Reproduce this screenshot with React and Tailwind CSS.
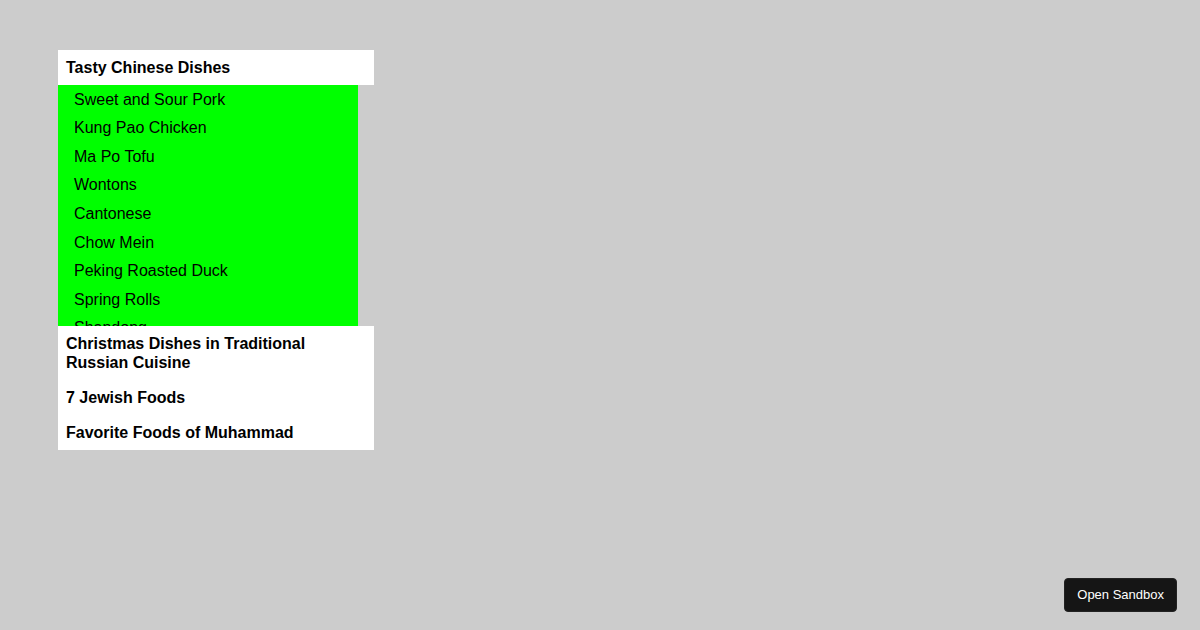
const sections = [
  {
    title: "Tasty Chinese Dishes",
    items: [
      "Sweet and Sour Pork",
      "Kung Pao Chicken",
      "Ma Po Tofu",
      "Wontons",
      "Cantonese",
      "Chow Mein",
      "Peking Roasted Duck",
      "Spring Rolls",
      "Shandong",
    ],
  },
  { title: "Christmas Dishes in Traditional Russian Cuisine" },
  { title: "7 Jewish Foods" },
  { title: "Favorite Foods of Muhammad" },
];

function Section({ title, items }) {
  return (
    <section>
      <h2>
        <button
          type="button"
          aria-expanded={Boolean(items)}
          className="block w-full bg-white p-2 text-left text-base leading-[19px] font-bold"
        >
          {title}
        </button>
      </h2>
      {items && (
        <div className="mr-4 h-[241px] overflow-hidden bg-[#00ff00] px-4">
          <ul className="grid h-[257px] auto-rows-fr items-center">
            {items.map((item) => (
              <li key={item} className="text-base leading-[19px]">
                {item}
              </li>
            ))}
          </ul>
        </div>
      )}
    </section>
  );
}

export default function App() {
  return (
    <div className="min-h-screen bg-[#cccccc] font-[Helvetica,'Liberation_Sans',Arial,sans-serif] text-black">
      <main className="px-[58px] pt-[50px]">
        <div className="max-w-[316px]">
          {sections.map((section) => (
            <Section key={section.title} {...section} />
          ))}
        </div>
      </main>
      <button
        type="button"
        className="fixed right-[23px] bottom-[18px] rounded-sm border border-[#222222] bg-[#151515] px-3 py-2 text-[13px] leading-4 text-white"
      >
        Open Sandbox
      </button>
    </div>
  );
}
